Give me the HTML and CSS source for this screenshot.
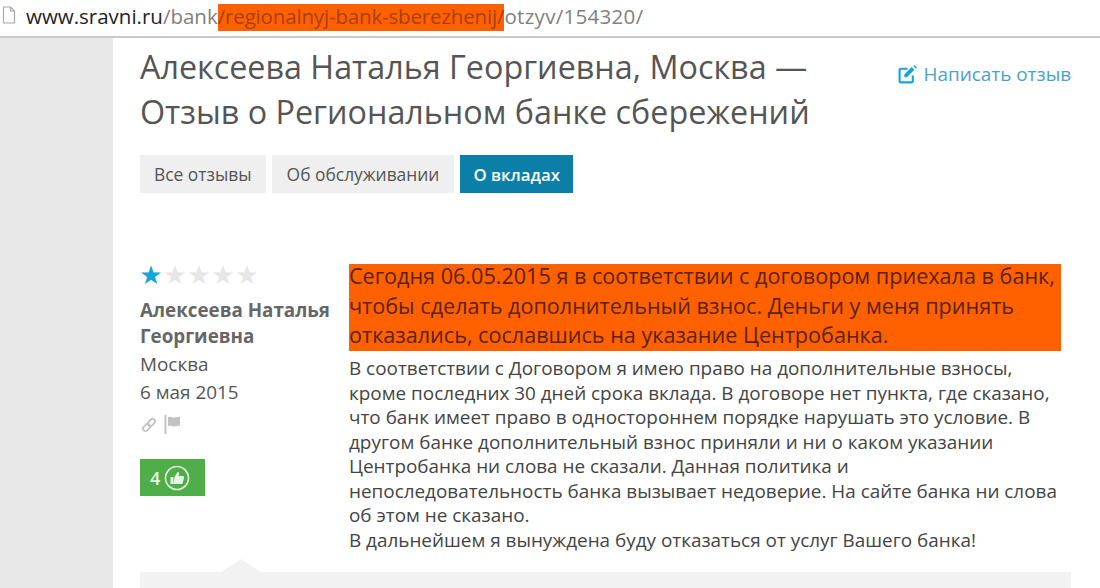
FILE: index.html
```html
<!DOCTYPE html>
<html lang="ru">
<head>
<meta charset="utf-8">
<title>Отзыв</title>
<link rel="stylesheet" href="styles.css">
</head>
<body>
<header class="urlbar">
  <svg class="page-icon" width="14" height="18" viewBox="0 0 14 18"><path d="M1.500 1h7l4 4v12h-11z M8.500 1v4h4" fill="#fff" stroke="#aaa" stroke-width="1.200"/></svg>
  <div class="url"><span class="host">www.sravni.ru</span>/bank<span class="mark">/regionalnyj-bank-sberezhenij/</span><span class="tail">otzyv/154320/</span></div>
</header>
<div class="page">
  <main class="sheet">
    <div class="title-row">
      <h1>Алексеева Наталья Георгиевна, Москва —<br>Отзыв о Региональном банке сбережений</h1>
      <a class="write">
        <svg width="19" height="19" viewBox="0 0 18 18"><path d="M9 3.500H2.500a1 1 0 0 0-1 1v11a1 1 0 0 0 1 1h10.500a1 1 0 0 0 1-1V10" fill="none" stroke="#12a5d8" stroke-width="2"/><path d="M6 9l7-7 2.500 2.500-7 7H6z M14.500 1l1-1 2.500 2.500-1 1z" fill="#12a5d8"/></svg>
        Написать отзыв
      </a>
    </div>
    <nav class="tabs">
      <a class="tab">Все отзывы</a>
      <a class="tab">Об обслуживании</a>
      <a class="tab active">О вкладах</a>
    </nav>
    <section class="review">
      <aside class="author">
        <div class="stars"><span class="on">★</span><span>★</span><span>★</span><span>★</span><span>★</span></div>
        <div class="name">Алексеева Наталья Георгиевна</div>
        <div class="meta">Москва</div>
        <div class="meta">6 мая 2015</div>
        <div class="tools">
          <svg width="19" height="18" viewBox="0 0 19 18"><g fill="none" stroke="#c2c2c2" stroke-width="1.800" transform="rotate(-45 9 9)"><rect x="1.500" y="6.500" width="8" height="5" rx="2.500"/><rect x="8.500" y="6.500" width="8" height="5" rx="2.500"/></g></svg>
          <svg width="19" height="20" viewBox="0 0 19 20"><path d="M1.500 0v19" stroke="#c2c2c2" stroke-width="2"/><path d="M4 2c3-1 4 1 7 .5s4-1 5-.5v9c-2-.5-3 .5-5 .5s-4-1.500-7-.5z" fill="#c2c2c2"/></svg>
        </div>
        <div class="likes">4
          <svg width="26" height="26" viewBox="0 0 26 26"><circle cx="13" cy="13" r="11.500" fill="none" stroke="#e4f3e2" stroke-width="1.600"/><path d="M6.500 12h3v7h-3z M10.500 12l3-5c1.500 0 2 1 1.500 2.500l-.5 1.500h4.500c1 0 1.300 1 1 2l-1.300 5c-.2.700-.7 1-1.400 1h-7.800z" fill="#e4f3e2"/></svg>
        </div>
      </aside>
      <article class="text">
        <p class="lead">Сегодня 06.05.2015 я в соответствии с договором приехала в банк, чтобы сделать дополнительный взнос. Деньги у меня принять отказались, сославшись на указание Центробанка.</p>
        <p class="body">В соответствии с Договором я имею право на дополнительные взносы, кроме последних 30 дней срока вклада. В договоре нет пункта, где сказано, что банк имеет право в одностороннем порядке нарушать это условие. В другом банке дополнительный взнос приняли и ни о каком указании Центробанка ни слова не сказали. Данная политика и непоследовательность банка вызывает недоверие. На сайте банка ни слова об этом не сказано.<br>В дальнейшем я вынуждена буду отказаться от услуг Вашего банка!</p>
      </article>
    </section>
    <div class="comments"></div>
  </main>
</div>
</body>
</html>
```
FILE: styles.css
```css
* { box-sizing: border-box; }
html, body { margin: 0; height: 100%; overflow: hidden; }
body {
  width: 1100px;
  height: 588px;
  display: flex;
  flex-direction: column;
  font-family: "Open Sans", "Noto Sans", sans-serif;
  color: #444;
  background: #fff;
}
.urlbar {
  height: 38px;
  display: flex;
  align-items: flex-start;
  padding: 4px 0 0 2px;
  gap: 10px;
  border-bottom: 2px solid #c9c9c9;
  flex: none;
}
.page-icon { margin-top: 2px; flex: none; }
.url {
  font-size: 20.500px;
  line-height: 24px;
  color: #7f7f7f;
  white-space: nowrap;
}
.host { color: #222; }
.mark { background: #ff6000; color: #a83f08; display: inline-block; height: 27px; letter-spacing: -0.16px; }
.tail { letter-spacing: 0.3px; }
.page {
  flex: 1;
  min-height: 0;
  background: #e8e8e8;
  padding-left: 113px;
}
.sheet {
  background: #fff;
  height: 100%;
  padding: 6px 29px 0 27px;
  display: flex;
  flex-direction: column;
}
.title-row { display: flex; justify-content: space-between; align-items: flex-start; }
h1 {
  margin: 0;
  font-weight: 400;
  font-size: 32.300px;
  line-height: 45px;
  color: #555;
  white-space: nowrap;
}
.write {
  display: flex;
  align-items: center;
  gap: 7px;
  margin-top: 18px;
  font-size: 18.900px;
  line-height: 24px;
  color: #4a9fd0;
}
.tabs { display: flex; gap: 6px; margin-top: 21px; }
.tab {
  height: 38px;
  padding: 0 14px;
  display: flex;
  align-items: center;
  background: #efefef;
  font-size: 17.400px;
  color: #555;
}
.tab + .tab { padding: 0 15px; }
.tab.active { background: #0b7fa8; color: #fff; font-weight: 600; padding: 0 13px; font-size: 16.800px; }
.review { display: flex; margin-top: 70px; }
.author { width: 209px; flex: none; }
.stars { display: flex; height: 24px; font-size: 26px; line-height: 24px; font-family: "DejaVu Sans", sans-serif; color: #e6e6e6; margin-left: -1px; }
.stars span { width: 24px; text-align: center; }
.stars .on { color: #12a5d8; }
.name { font-weight: 700; font-size: 18.800px; line-height: 26px; color: #666; margin-top: 10px; width: 195px; }
.meta { font-size: 18.900px; line-height: 28px; color: #555; }
.name + .meta { margin-top: 1px; }
.tools { display: flex; gap: 5px; align-items: center; margin-top: 8px; height: 22px; }
.likes {
  margin-top: 23px;
  width: 65px;
  height: 37px;
  background: #4fae49;
  color: #e8f5e6;
  font-size: 18px;
  font-weight: 600;
  display: flex;
  align-items: center;
  gap: 4px;
  padding-left: 10px;
}
.text { flex: none; width: 712px; margin-top: -2px; }
.lead {
  margin: 0 0 5px;
  background: linear-gradient(#ff6000, #ff6000) bottom / 100% 87px no-repeat;
  color: #5a2308;
  font-size: 21.600px;
  line-height: 29.500px;
  height: 90px;
}
.body { margin: 0; font-size: 18.900px; line-height: 24.570px; color: #444; width: 712px; }
.comments {
  position: absolute;
  top: 572px;
  left: 140px;
  width: 931px;
  height: 16px;
  background: #f2f2f2;
}
.comments::before {
  content: "";
  position: absolute;
  left: 81px;
  top: -13px;
  border-left: 20px solid transparent;
  border-right: 20px solid transparent;
  border-bottom: 13px solid #f2f2f2;
}
```
